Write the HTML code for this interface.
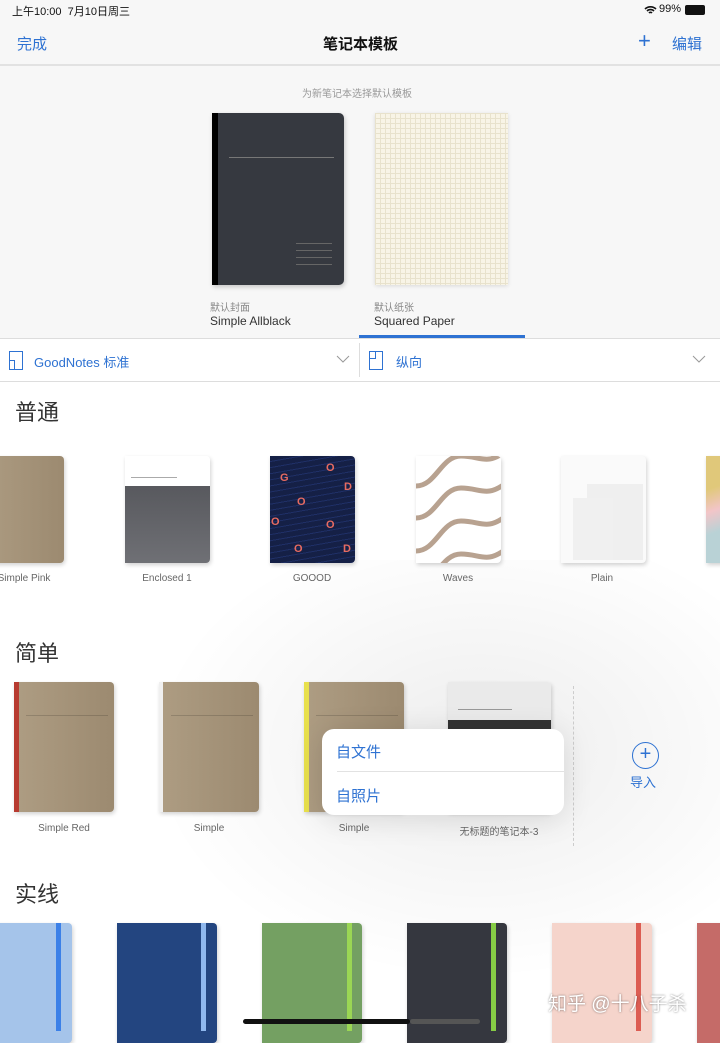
<!DOCTYPE html>
<html><head><meta charset="utf-8"><style>
*{margin:0;padding:0;box-sizing:border-box}
body{width:720px;height:1031px;overflow:hidden;background:#fff;font-family:"Liberation Sans","Noto Sans CJK SC",sans-serif;position:relative;color:#222}
.a{position:absolute}
.t{position:absolute;white-space:nowrap}
.cov{position:absolute;border-radius:0 4px 4px 0;box-shadow:1px 2px 4px rgba(0,0,0,.18)}
.lbl{position:absolute;font-size:10px;color:#666;text-align:center;width:120px;white-space:nowrap}
.kraft{background:linear-gradient(90deg,#ad9c82,#9c8a70)}
.ln{position:absolute;height:1px;background:rgba(0,0,0,.15)}
</style></head><body>
<div class="a" style="left:0;top:0;width:720px;height:338px;background:#f7f7f7"></div>
<div class="a" style="left:0;top:64px;width:720px;height:2px;background:#e2e2e2"></div>
<div class="t" style="left:12px;top:3px;font-size:11px;color:#111">上午10:00&nbsp;&nbsp;7月10日周三</div>
<div class="t" style="left:659px;top:3px;font-size:11px;color:#111">99%</div>
<svg class="a" style="left:644px;top:5px" width="13" height="10" viewBox="0 0 13 10"><path d="M1 4a8 8 0 0 1 11 0M3 6a5 5 0 0 1 7 0M5 8a2 2 0 0 1 3 0" stroke="#111" stroke-width="1.6" fill="none"/></svg>
<div class="a" style="left:685px;top:5px;width:20px;height:10px;border-radius:2px;background:#111"></div>
<div class="t" style="left:17px;top:33px;font-size:15px;color:#2e72d2">完成</div>
<div class="t" style="left:323px;top:33px;font-size:15px;color:#111;font-weight:bold">笔记本模板</div>
<div class="t" style="left:638px;top:28px;font-size:22px;color:#2e72d2;font-weight:300">+</div>
<div class="t" style="left:672px;top:33px;font-size:15px;color:#2e72d2">编辑</div>
<div class="t" style="left:302px;top:85px;font-size:10px;color:#999">为新笔记本选择默认模板</div>
<div class="a" style="left:212px;top:113px;width:132px;height:172px;background:#363940;border-radius:0 5px 5px 0;box-shadow:1px 2px 5px rgba(0,0,0,.2);border-left:6px solid #000"></div>
<div class="ln" style="left:229px;top:157px;width:105px;background:#777"></div>
<div class="ln" style="left:296px;top:243px;width:36px;background:#666"></div>
<div class="ln" style="left:296px;top:250px;width:36px;background:#666"></div>
<div class="ln" style="left:296px;top:257px;width:36px;background:#666"></div>
<div class="ln" style="left:296px;top:264px;width:36px;background:#666"></div>
<div class="a" style="left:375px;top:113px;width:133px;height:172px;background-color:#f8f4e6;background-image:linear-gradient(#e8e2cc 1px,transparent 1px),linear-gradient(90deg,#e8e2cc 1px,transparent 1px);background-size:5px 5px;box-shadow:0 1px 4px rgba(0,0,0,.12)"></div>
<div class="t" style="left:210px;top:299px;font-size:10px;color:#888">默认封面</div>
<div class="t" style="left:210px;top:314px;font-size:12px;color:#333">Simple Allblack</div>
<div class="t" style="left:374px;top:299px;font-size:10px;color:#888">默认纸张</div>
<div class="t" style="left:374px;top:314px;font-size:12px;color:#333">Squared Paper</div>
<div class="a" style="left:359px;top:335px;width:166px;height:3px;background:#2e72d2"></div>
<div class="a" style="left:0;top:338px;width:720px;height:1px;background:#ddd"></div>
<div class="a" style="left:0;top:381px;width:720px;height:1px;background:#ddd"></div>
<div class="a" style="left:359px;top:343px;width:1px;height:34px;background:#ddd"></div>
<div class="a" style="left:9px;top:351px;width:14px;height:19px;border:1px solid #2e72d2"></div>
<div class="a" style="left:9px;top:360px;width:6px;height:10px;border-top:1px solid #2e72d2;border-right:1px solid #2e72d2"></div>
<div class="t" style="left:34px;top:352px;font-size:13px;color:#2e72d2">GoodNotes 标准</div>
<svg class="a" style="left:336px;top:355px" width="14" height="9"><path d="M1 1l6 6 6-6" stroke="#999" fill="none"/></svg>
<div class="a" style="left:369px;top:351px;width:14px;height:19px;border:1px solid #2e72d2"></div>
<div class="a" style="left:369px;top:351px;width:7px;height:8px;border-right:1px solid #2e72d2;border-bottom:1px solid #2e72d2"></div>
<div class="t" style="left:396px;top:352px;font-size:13px;color:#2e72d2">纵向</div>
<svg class="a" style="left:692px;top:355px" width="14" height="9"><path d="M1 1l6 6 6-6" stroke="#999" fill="none"/></svg>
<div class="a" style="left:60px;top:560px;width:720px;height:420px;background:radial-gradient(ellipse 330px 230px at 420px 190px,rgba(0,0,0,.07),rgba(0,0,0,0))"></div>
<div class="t" style="left:15px;top:395px;font-size:22px;color:#333">普通</div>
<div class="cov kraft" style="left:-20px;top:456px;width:84px;height:107px"></div>
<div class="cov" style="left:125px;top:456px;width:85px;height:107px;background:linear-gradient(#fff 0,#fff 30px,#58595e 30px,#6f7075)"></div>
<div class="ln" style="left:131px;top:477px;width:46px;background:#aaa"></div>
<div class="cov" style="left:270px;top:456px;width:85px;height:107px;background:repeating-linear-gradient(170deg,#152046 0 5px,#1f2f66 5px 6px)"></div>
<div class="t" style="left:280px;top:472px;font-size:11px;font-weight:bold;color:#e76b61">G</div>
<div class="t" style="left:326px;top:462px;font-size:11px;font-weight:bold;color:#e76b61">O</div>
<div class="t" style="left:344px;top:481px;font-size:11px;font-weight:bold;color:#e76b61">D</div>
<div class="t" style="left:297px;top:496px;font-size:11px;font-weight:bold;color:#e76b61">O</div>
<div class="t" style="left:271px;top:516px;font-size:11px;font-weight:bold;color:#e76b61">O</div>
<div class="t" style="left:326px;top:519px;font-size:11px;font-weight:bold;color:#e76b61">O</div>
<div class="t" style="left:294px;top:543px;font-size:11px;font-weight:bold;color:#e76b61">O</div>
<div class="t" style="left:343px;top:543px;font-size:11px;font-weight:bold;color:#e76b61">D</div>
<div class="cov" style="left:416px;top:456px;width:85px;height:107px;background:#fff;overflow:hidden">
<svg width="85" height="107"><g stroke="#b8a290" stroke-width="5" fill="none"><path d="M0 30c20 0 25-30 45-30s25 10 45-5"/><path d="M0 62c20 0 25-30 45-30s25 10 45-5"/><path d="M0 95c20 0 25-30 45-30s25 10 45-5"/><path d="M0 128c20 0 25-30 45-30s25 10 45-5"/></g></svg></div>
<div class="cov" style="left:561px;top:456px;width:85px;height:107px;background:#fafafa"></div>
<div class="a" style="left:587px;top:484px;width:56px;height:76px;background:#efefef"></div>
<div class="a" style="left:573px;top:498px;width:40px;height:62px;background:#f0f0f0"></div>
<div class="cov" style="left:706px;top:456px;width:20px;height:107px;background:linear-gradient(160deg,#e0c87a 30%,#f2c5c8 50%,#b9d2d6 70%)"></div>
<div class="lbl" style="left:-36px;top:573px">Simple Pink</div>
<div class="lbl" style="left:107px;top:573px">Enclosed 1</div>
<div class="lbl" style="left:252px;top:573px">GOOOD</div>
<div class="lbl" style="left:398px;top:573px">Waves</div>
<div class="lbl" style="left:542px;top:573px">Plain</div>
<div class="t" style="left:15px;top:636px;font-size:22px;color:#333">简单</div>
<div class="cov kraft" style="left:14px;top:682px;width:100px;height:130px;border-left:5px solid #b73b30"></div>
<div class="cov kraft" style="left:159px;top:682px;width:100px;height:130px;border-left:4px solid #f0f0f0"></div>
<div class="cov kraft" style="left:304px;top:682px;width:100px;height:130px;border-left:5px solid #e8e04c"></div>
<div class="ln" style="left:26px;top:715px;width:82px"></div><div class="ln" style="left:171px;top:715px;width:82px"></div><div class="ln" style="left:316px;top:715px;width:82px"></div>
<div class="cov" style="left:448px;top:682px;width:103px;height:130px;background:linear-gradient(#eaeaea 0,#eaeaea 38px,#333 38px,#333 48px,#eee 48px)"></div>
<div class="ln" style="left:458px;top:709px;width:54px;background:#999"></div>
<div class="lbl" style="left:4px;top:823px">Simple Red</div>
<div class="lbl" style="left:149px;top:823px">Simple</div>
<div class="lbl" style="left:294px;top:823px">Simple</div>
<div class="lbl" style="left:439px;top:823px">无标题的笔记本-3</div>
<div class="a" style="left:573px;top:686px;width:0;height:160px;border-left:1px dashed #ccc"></div>
<div class="a" style="left:632px;top:742px;width:27px;height:27px;border:1.5px solid #2e72d2;border-radius:50%;color:#2e72d2;font-size:20px;line-height:22px;text-align:center">+</div>
<div class="t" style="left:630px;top:772px;font-size:13px;color:#2e72d2">导入</div>
<div class="a" style="left:322px;top:729px;width:242px;height:86px;background:#fff;border-radius:12px;box-shadow:0 4px 30px rgba(0,0,0,.12)"></div>
<div class="a" style="left:337px;top:771px;width:227px;height:1px;background:#e2e2e2"></div>
<div class="t" style="left:336px;top:741px;font-size:15px;color:#2e72d2">自文件</div>
<div class="t" style="left:336px;top:785px;font-size:15px;color:#2e72d2">自照片</div>
<div class="t" style="left:15px;top:877px;font-size:22px;color:#333">实线</div>
<div class="cov" style="left:-30px;top:923px;width:102px;height:120px;background:#a5c4ea"></div><div class="a" style="left:56px;top:923px;width:5px;height:108px;background:#3b80e8"></div>
<div class="cov" style="left:117px;top:923px;width:100px;height:120px;background:#234580"></div><div class="a" style="left:201px;top:923px;width:5px;height:108px;background:#8fb8ee"></div>
<div class="cov" style="left:262px;top:923px;width:100px;height:120px;background:#74a062"></div><div class="a" style="left:347px;top:923px;width:5px;height:108px;background:#9bd654"></div>
<div class="cov" style="left:407px;top:923px;width:100px;height:120px;background:#35373f"></div><div class="a" style="left:491px;top:923px;width:5px;height:108px;background:#86cc45"></div>
<div class="cov" style="left:552px;top:923px;width:100px;height:120px;background:#f5d4cb"></div><div class="a" style="left:636px;top:923px;width:5px;height:108px;background:#dc5c52"></div>
<div class="cov" style="left:697px;top:923px;width:40px;height:120px;background:#c56b68"></div>
<div class="t" style="left:548px;top:989px;font-size:19px;color:#fff;text-shadow:0 0 2px rgba(0,0,0,.5)">知乎 @十八子杀</div>
<div class="a" style="left:243px;top:1019px;width:167px;height:5px;border-radius:3px;background:#111"></div>
<div class="a" style="left:410px;top:1019px;width:70px;height:5px;border-radius:3px;background:#555"></div>
</body></html>
